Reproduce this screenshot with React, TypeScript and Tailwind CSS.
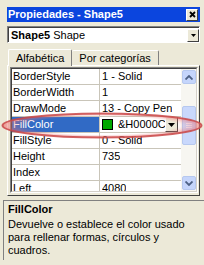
import React from 'react'

type Row = { name: string; value: string; selected?: boolean; color?: boolean }

const rows: Row[] = [
  { name: 'BorderStyle', value: '1 - Solid' },
  { name: 'BorderWidth', value: '1' },
  { name: 'DrawMode', value: '13 - Copy Pen' },
  { name: 'FillColor', value: '&H0000C0', selected: true, color: true },
  { name: 'FillStyle', value: '0 - Solid' },
  { name: 'Height', value: '735' },
  { name: 'Index', value: '' },
  { name: 'Left', value: '4080' },
]

function ScrollArrow({ up }: { up?: boolean }) {
  return (
    <div className="w-[14px] h-[14px] shrink-0 rounded-[2px] border border-[#b6c8ef] bg-[#c5d5fb] flex items-center justify-center">
      <svg width="8" height="5" viewBox="0 0 8 5">
        <path d={up ? 'M0.5 4.5 L4 1 L7.5 4.5' : 'M0.5 0.5 L4 4 L7.5 0.5'} fill="none" stroke="#4d6185" strokeWidth="1.8" />
      </svg>
    </div>
  )
}

export default function App() {
  return (
    <div
      className="relative w-[204px] h-[265px] overflow-hidden bg-[#ece9d8] text-[11px] text-black"
      style={{ fontFamily: '"Liberation Sans", Arial, sans-serif' }}
    >
      <div className="pl-[7px] pr-[4px] pt-[7px]">
        {/* title bar */}
        <div className="h-[15px] bg-[#0b45de] flex items-center justify-between pl-[1px] pr-[2px]">
          <span className="text-white font-bold leading-none">Propiedades - Shape5</span>
          <div className="w-[12px] h-[12px] bg-[#ece9d8] border-t border-l border-white border-r border-b border-r-[#404040] border-b-[#404040] flex items-center justify-center">
            <svg width="7" height="7" viewBox="0 0 7 7">
              <path d="M1 1 L6 6 M6 1 L1 6" stroke="#000" strokeWidth="1.8" />
            </svg>
          </div>
        </div>

        {/* object combo */}
        <div className="mt-[4px] h-[17px] border-t border-l border-[#808080] border-r border-b border-r-white border-b-white">
          <div className="h-full border-t border-l border-[#404040] bg-white flex items-center justify-between">
            <span className="pl-[2px] leading-none">
              <b>Shape5</b> Shape
            </span>
            <div className="w-[12px] h-[13px] bg-[#ece9d8] border-t border-l border-white border-r border-b border-r-[#404040] border-b-[#404040] flex items-center justify-center">
              <svg width="5" height="3" viewBox="0 0 5 3">
                <path d="M0 0 H5 L2.5 3 Z" fill="#000" />
              </svg>
            </div>
          </div>
        </div>

        {/* tabs */}
        <div className="mt-[5px] flex items-end h-[17px] pl-[1px]">
          <div className="h-[17px] px-[7px] bg-[#ece9d8] border-t border-l border-white border-r border-r-[#808080] rounded-t-[2px] flex items-center relative z-10 -mb-px">
            Alfabética
          </div>
          <div className="h-[15px] px-[7px] border-t border-white border-r border-r-[#808080] rounded-t-[2px] flex items-center">
            Por categorías
          </div>
        </div>

        {/* tab panel */}
        <div className="h-[131px] border-t border-l border-white border-r border-b border-r-[#404040] border-b-[#404040] pt-[1px] pl-[2px] pr-[1px] pb-[2px]">
          <div className="h-full border-t border-l border-[#808080] border-r border-b border-r-white border-b-white">
            <div className="h-full border-t border-l border-[#404040] border-r border-b border-r-[#d4d0c8] border-b-[#d4d0c8] bg-white flex overflow-hidden">
              <div className="flex-1 flex flex-col min-w-0">
                {rows.map((r) => (
                  <div key={r.name} className="h-[16px] shrink-0 flex border-b border-[#c9c5b9]">
                    <div
                      className={`w-[88px] shrink-0 pl-[1px] flex items-center border-r border-[#c9c5b9] ${
                        r.selected ? 'bg-[#316ac5] text-white' : ''
                      }`}
                    >
                      {r.name}
                    </div>
                    <div className="flex-1 flex items-center pl-[2px] min-w-0">
                      {r.color && <div className="w-[11px] h-[11px] bg-[#00a800] border border-black shrink-0 mr-[5px]" />}
                      <span className="whitespace-nowrap overflow-hidden min-w-0">{r.value}</span>
                      {r.color && (
                        <div className="ml-auto mr-[3px] w-[13px] h-[15px] shrink-0 bg-[#ece9d8] border-t border-l border-white border-r border-b border-r-[#404040] border-b-[#404040] flex items-center justify-center">
                          <svg width="7" height="4" viewBox="0 0 7 4">
                            <path d="M0 0 H7 L3.5 4 Z" fill="#000" />
                          </svg>
                        </div>
                      )}
                    </div>
                  </div>
                ))}
              </div>
              {/* scrollbar */}
              <div className="w-[15px] shrink-0 bg-[#f7f6f1] flex flex-col items-center py-[1px]">
                <ScrollArrow up />
                <div className="mt-[22px] w-[14px] h-[39px] shrink-0 rounded-[2px] border border-[#b6c8ef] bg-[#c9d8fc] flex flex-col items-center justify-center gap-[1px]">
                  <div className="w-[6px] h-px bg-[#eef3ff]" />
                  <div className="w-[6px] h-px bg-[#eef3ff]" />
                  <div className="w-[6px] h-px bg-[#eef3ff]" />
                </div>
                <div className="flex-1" />
                <ScrollArrow />
              </div>
            </div>
          </div>
        </div>
      </div>

      {/* description */}
      <div className="mt-[4px] ml-[3px] h-[60px] border-t border-l border-[#808080] pl-[4px] pt-[2px] leading-[13px]">
        <div className="font-bold">FillColor</div>
        <div className="mt-[2px] pr-[10px]">Devuelve o establece el color usado para rellenar formas, círculos y cuadros.</div>
      </div>

      {/* highlight ellipse */}
      <svg className="absolute left-0 top-[111px] pointer-events-none" width="204" height="29" viewBox="0 0 204 29">
        <defs>
          <radialGradient id="rg" cx="50%" cy="50%" r="50%">
            <stop offset="75%" stopColor="#e88" stopOpacity="0" />
            <stop offset="100%" stopColor="#e66" stopOpacity="0.6" />
          </radialGradient>
        </defs>
        <ellipse cx="102" cy="14.5" rx="99.5" ry="12" fill="url(#rg)" stroke="#c94848" strokeOpacity="0.85" strokeWidth="2" />
      </svg>
    </div>
  )
}
